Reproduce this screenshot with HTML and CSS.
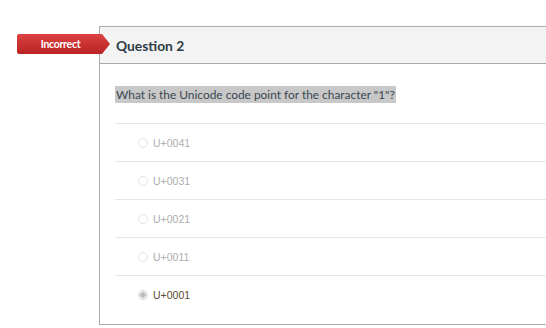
FILE: index.html
```html
<!DOCTYPE html>
<html>
<head>
<meta charset="utf-8">
<link rel="stylesheet" href="styles.css">
</head>
<body>
<div class="page">
  <div class="question">
    <div class="badge">Incorrect</div>
    <div class="header"><span class="title">Question 2</span></div>
    <div class="body">
      <div class="prompt"><span class="hl">What is the Unicode code point for the character "1"?</span></div>
      <ul class="answers">
        <li class="answer"><span class="radio"></span><span class="label">U+0041</span></li>
        <li class="answer"><span class="radio"></span><span class="label">U+0031</span></li>
        <li class="answer"><span class="radio"></span><span class="label">U+0021</span></li>
        <li class="answer"><span class="radio"></span><span class="label">U+0011</span></li>
        <li class="answer selected"><span class="radio"></span><span class="label">U+0001</span></li>
      </ul>
    </div>
  </div>
</div>
</body>
</html>
```

FILE: styles.css
```css
html, body {
  margin: 0;
  padding: 0;
  background: #ffffff;
  overflow: hidden;
}
body {
  font-family: Lato, "Liberation Sans", sans-serif;
  color: #2d3b45;
}
.page {
  padding: 26px 0 0 99px;
}
.question {
  position: relative;
  border: 1px solid #aaaaaa;
  border-right: none;
}
.badge {
  position: absolute;
  left: -83px;
  top: 7px;
  width: 93px;
  height: 20px;
  box-sizing: border-box;
  padding-right: 6px;
  background: linear-gradient(#dc4242, #b92323);
  clip-path: polygon(0 0, 85px 0, 93px 10px, 85px 20px, 0 20px);
  border-radius: 2px 0 0 2px;
  color: #ffffff;
  font-weight: 700;
  font-size: 10.5px;
  letter-spacing: -0.3px;
  display: flex;
  align-items: center;
  justify-content: center;
}
.header {
  height: 36px;
  background: #f3f3f3;
  border-bottom: 1px solid #aaaaaa;
  display: flex;
  align-items: center;
  padding-left: 16px;
}
.title {
  font-weight: 700;
  font-size: 13.8px;
  color: #2d3b45;
  padding-top: 1px;
}
.body {
  padding: 22px 0 11px 15px;
}
.prompt {
  font-size: 11.9px;
  line-height: 18px;
  height: 18px;
}
.hl {
  background: #c8c8c8;
  color: #3a4650;
  padding: 1px 1px;
}
.answers {
  list-style: none;
  margin: 19px 0 0 0;
  padding: 0;
}
.answer {
  border-top: 1px solid #e6e6e6;
  height: 37px;
  display: flex;
  align-items: center;
  padding-left: 23px;
  font-family: "Liberation Sans", Arial, sans-serif;
  font-size: 10.5px;
  color: #adadad;
}
.radio {
  width: 10px;
  height: 10px;
  box-sizing: border-box;
  border: 1px solid #e3e3e3;
  border-radius: 50%;
  margin-right: 5px;
  background: #ffffff;
}
.selected .label {
  color: #5a4a2e;
}
.selected .radio {
  border-color: #d6d6d6;
  background: radial-gradient(circle, #bdbdbd 0 2.5px, #f1f1f1 3px);
}
```
